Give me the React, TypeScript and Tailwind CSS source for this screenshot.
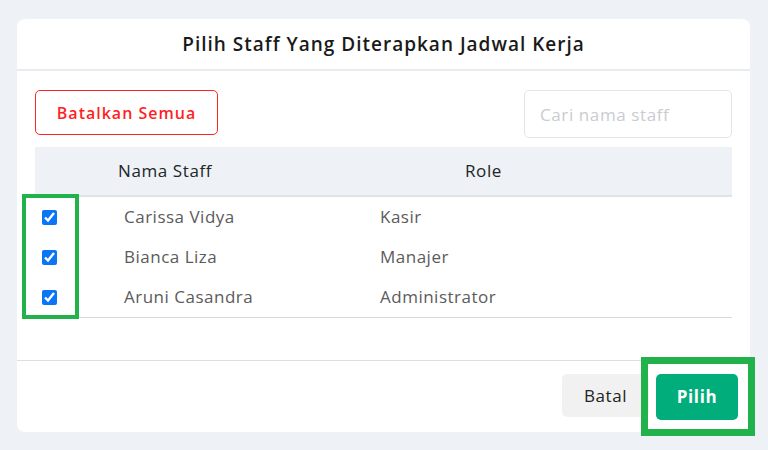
import { useState } from 'react';

type Staff = { id: number; name: string; role: string };

const staffList: Staff[] = [
  { id: 1, name: 'Carissa Vidya', role: 'Kasir' },
  { id: 2, name: 'Bianca Liza', role: 'Manajer' },
  { id: 3, name: 'Aruni Casandra', role: 'Administrator' },
];

export default function App() {
  const [selected, setSelected] = useState<number[]>(staffList.map((s) => s.id));
  const [search, setSearch] = useState('');

  const toggle = (id: number) => {
    setSelected((prev) => (prev.includes(id) ? prev.filter((x) => x !== id) : [...prev, id]));
  };

  return (
    <div
      className="relative w-[768px] h-[450px] bg-[#eef1f5] pt-[19px] pl-[17px] overflow-hidden"
      style={{ fontFamily: '"Open Sans", "Noto Sans", sans-serif' }}
    >
      <div className="w-[733px] h-[413px] bg-white rounded-[8px] flex flex-col">
        {/* Header */}
        <div className="h-[52px] flex items-center justify-center border-b-2 border-[#e9ebee]">
          <h2 className="text-[19px] font-semibold text-[#1a1a1a] tracking-[1px] pt-[1px]">
            Pilih Staff Yang Diterapkan Jadwal Kerja
          </h2>
        </div>

        {/* Body */}
        <div className="px-[18px] pt-[19px] pb-[42px] border-b border-[#dcdfe3]">
          <div className="flex items-start justify-between">
            <button
              onClick={() => setSelected([])}
              className="w-[183px] h-[45px] rounded-[5px] border border-[#ff2424] text-[#ff1f1f] text-[16px] font-semibold tracking-[1px]"
            >
              Batalkan Semua
            </button>
            <input
              value={search}
              onChange={(e) => setSearch(e.target.value)}
              placeholder="Cari nama staff"
              className="w-[208px] h-[48px] rounded-[5px] border border-[#e3e5e8] px-[15px] text-[17px] tracking-[0.6px] text-[#333] placeholder:text-[#c9ccd0] outline-none"
            />
          </div>

          <div className="mt-[9px]">
            <div className="h-[50px] bg-[#eef1f5] flex items-center border-b-2 border-[#dfe2e6] text-[17px] tracking-[0.6px] text-[#212529]">
              <div className="w-[83px]" />
              <div className="w-[347px]">Nama Staff</div>
              <div>Role</div>
            </div>
            <div className="border-b border-[#d6d9dd]">
              {staffList
                .filter((s) => s.name.toLowerCase().includes(search.toLowerCase()))
                .map((s) => (
                  <div key={s.id} className="h-[40px] flex items-center text-[17px] text-[#5b5b5b] tracking-[0.5px]">
                    <div className="w-[89px] pl-[7px] flex items-center">
                      <input
                        type="checkbox"
                        checked={selected.includes(s.id)}
                        onChange={() => toggle(s.id)}
                        className="w-[15px] h-[15px] accent-[#0a75f5]"
                      />
                    </div>
                    <div className="w-[256px]">{s.name}</div>
                    <div>{s.role}</div>
                  </div>
                ))}
            </div>
          </div>
        </div>

        {/* Footer */}
        <div className="flex-1 flex items-start justify-end gap-[7px] pt-[13px] pr-[12px]">
          <button className="w-[87px] h-[43px] rounded-[5px] bg-[#f1f1f1] text-[17px] text-[#222] tracking-[0.6px]">
            Batal
          </button>
          <button className="w-[82px] h-[46px] rounded-[5px] bg-[#00ad7b] text-[17px] font-bold text-white tracking-[0.6px]">
            Pilih
          </button>
        </div>
      </div>

      {/* Annotation highlights */}
      <div className="absolute left-[22px] top-[194px] w-[57px] h-[125px] border-4 border-[#22b24c] pointer-events-none" />
      <div className="absolute left-[641px] top-[357px] w-[114px] h-[79px] border-[7px] border-[#22b24c] pointer-events-none" />
    </div>
  );
}
